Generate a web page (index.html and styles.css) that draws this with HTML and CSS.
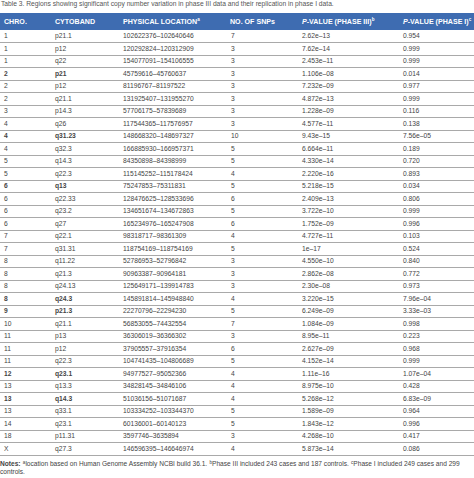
FILE: index.html
```html
<!DOCTYPE html>
<html>
<head>
<meta charset="utf-8">
<link rel="stylesheet" href="styles.css">
</head>
<body>
<div class="page">
  <p class="caption">Table 3. Regions showing significant copy number variation in phase III data and their replication in phase I data.</p>
  <table class="data">
    <colgroup>
      <col class="c1"><col class="c2"><col class="c3"><col class="c4"><col class="c5"><col class="c6">
    </colgroup>
    <thead>
      <tr>
        <th>CHRO.</th>
        <th>CYTOBAND</th>
        <th>PHYSICAL LOCATION<sup>a</sup></th>
        <th>NO. OF SNPs</th>
        <th><i>P</i>-VALUE (PHASE III)<sup>b</sup></th>
        <th><i>P</i>-VALUE (PHASE I)<sup>c</sup></th>
      </tr>
    </thead>
    <tbody>
      <tr><td>1</td><td>p21.1</td><td>102622376–102640646</td><td>7</td><td>2.62e–13</td><td>0.954</td></tr>
      <tr><td>1</td><td>p12</td><td>120292824–120312909</td><td>3</td><td>7.62e–14</td><td>0.999</td></tr>
      <tr><td>1</td><td>q22</td><td>154077091–154106555</td><td>3</td><td>2.453e–11</td><td>0.999</td></tr>
      <tr class="hl"><td>2</td><td>p21</td><td>45759616–45760637</td><td>3</td><td>1.106e–08</td><td>0.014</td></tr>
      <tr><td>2</td><td>p12</td><td>81196767–81197522</td><td>3</td><td>7.232e–09</td><td>0.977</td></tr>
      <tr><td>2</td><td>q21.1</td><td>131925407–131955270</td><td>3</td><td>4.872e–13</td><td>0.999</td></tr>
      <tr><td>3</td><td>p14.3</td><td>57706175–57839689</td><td>3</td><td>1.228e–09</td><td>0.116</td></tr>
      <tr><td>4</td><td>q26</td><td>117544365–117576957</td><td>3</td><td>4.577e–11</td><td>0.138</td></tr>
      <tr class="hl"><td>4</td><td>q31.23</td><td>148668320–148697327</td><td>10</td><td>9.43e–15</td><td>7.56e–05</td></tr>
      <tr><td>4</td><td>q32.3</td><td>166885930–166957371</td><td>5</td><td>6.664e–11</td><td>0.189</td></tr>
      <tr><td>5</td><td>q14.3</td><td>84350898–84398999</td><td>5</td><td>4.330e–14</td><td>0.720</td></tr>
      <tr><td>5</td><td>q22.3</td><td>115145252–115178424</td><td>4</td><td>2.220e–16</td><td>0.893</td></tr>
      <tr class="hl"><td>6</td><td>q13</td><td>75247853–75311831</td><td>5</td><td>5.218e–15</td><td>0.034</td></tr>
      <tr><td>6</td><td>q22.33</td><td>128476625–128533696</td><td>6</td><td>2.409e–13</td><td>0.806</td></tr>
      <tr><td>6</td><td>q23.2</td><td>134651674–134672863</td><td>5</td><td>3.722e–10</td><td>0.999</td></tr>
      <tr><td>6</td><td>q27</td><td>165234976–165247908</td><td>6</td><td>1.752e–09</td><td>0.996</td></tr>
      <tr><td>7</td><td>q22.1</td><td>98318717–98361309</td><td>4</td><td>4.727e–11</td><td>0.103</td></tr>
      <tr><td>7</td><td>q31.31</td><td>118754169–118754169</td><td>5</td><td>1e–17</td><td>0.524</td></tr>
      <tr><td>8</td><td>q11.22</td><td>52786953–52796842</td><td>3</td><td>4.550e–10</td><td>0.840</td></tr>
      <tr><td>8</td><td>q21.3</td><td>90963387–90964181</td><td>3</td><td>2.862e–08</td><td>0.772</td></tr>
      <tr><td>8</td><td>q24.13</td><td>125649171–139914783</td><td>3</td><td>2.30e–08</td><td>0.973</td></tr>
      <tr class="hl"><td>8</td><td>q24.3</td><td>145891814–145948840</td><td>4</td><td>3.220e–15</td><td>7.96e–04</td></tr>
      <tr class="hl"><td>9</td><td>p21.3</td><td>22270796–22294230</td><td>5</td><td>6.249e–09</td><td>3.33e–03</td></tr>
      <tr><td>10</td><td>q21.1</td><td>56853055–74432554</td><td>7</td><td>1.084e–09</td><td>0.998</td></tr>
      <tr><td>11</td><td>p13</td><td>36306019–36366302</td><td>3</td><td>8.95e–11</td><td>0.223</td></tr>
      <tr><td>11</td><td>p12</td><td>37905557–37916354</td><td>6</td><td>2.627e–09</td><td>0.968</td></tr>
      <tr><td>11</td><td>q22.3</td><td>104741435–104806689</td><td>5</td><td>4.152e–14</td><td>0.999</td></tr>
      <tr class="hl"><td>12</td><td>q23.1</td><td>94977527–95052366</td><td>4</td><td>1.11e–16</td><td>1.07e–04</td></tr>
      <tr><td>13</td><td>q13.3</td><td>34828145–34846106</td><td>4</td><td>8.975e–10</td><td>0.428</td></tr>
      <tr class="hl"><td>13</td><td>q14.3</td><td>51036156–51071687</td><td>4</td><td>5.268e–12</td><td>6.83e–09</td></tr>
      <tr><td>13</td><td>q33.1</td><td>103334252–103344370</td><td>5</td><td>1.589e–09</td><td>0.964</td></tr>
      <tr><td>14</td><td>q23.1</td><td>60136001–60140123</td><td>5</td><td>1.843e–12</td><td>0.996</td></tr>
      <tr><td>18</td><td>p11.31</td><td>3597746–3635894</td><td>3</td><td>4.268e–10</td><td>0.417</td></tr>
      <tr><td>X</td><td>q27.3</td><td>146596395–146646974</td><td>4</td><td>5.873e–14</td><td>0.086</td></tr>
    </tbody>
  </table>
  <p class="notes"><b>Notes:</b> <sup>a</sup>location based on Human Genome Assembly NCBI build 36.1. <sup>b</sup>Phase III included 243 cases and 187 controls. <sup>c</sup>Phase I included 249 cases and 299 controls.</p>
</div>
</body>
</html>
```

FILE: styles.css
```css
html, body {
  margin: 0;
  padding: 0;
  background: #ffffff;
}

body {
  font-family: "Liberation Sans", Arial, sans-serif;
  color: #444444;
  width: 474px;
  height: 478px;
  overflow: hidden;
}

.page {
  display: flex;
  flex-direction: column;
}

.caption {
  margin: 0 0 0 1px;
  font-size: 6.7px;
  line-height: 8px;
  height: 13px;
  color: #555;
  white-space: nowrap;
}

.data {
  width: 474px;
  border-collapse: collapse;
  table-layout: fixed;
  font-size: 6.7px;
}

.c1 { width: 55px; }
.c2 { width: 68px; }
.c3 { width: 107px; }
.c4 { width: 72px; }
.c5 { width: 101px; }
.c6 { width: 71px; }

.data th {
  background: #3e6cb1;
  color: #ffffff;
  font-weight: bold;
  font-size: 7.1px;
  text-align: left;
  height: 17px;
  padding: 0 0 0 4px;
  white-space: nowrap;
}

.data th:not(:first-child),
.data td:not(:first-child) {
  padding-left: 0;
}

.data sup {
  font-size: 4.5px;
  vertical-align: 3px;
  line-height: 0;
}

.data tbody tr {
  height: 12.5px;
}

.data td {
  padding: 0 0 0 4px;
  border-bottom: 1px solid #a9a9a9;
  white-space: nowrap;
  line-height: 10px;
}

.data td:nth-child(4) {
  padding-left: 1px;
}

.data tr.hl td:nth-child(1),
.data tr.hl td:nth-child(2) {
  font-weight: bold;
}

.notes {
  margin: 4px 0 0 0;
  font-size: 6.6px;
  line-height: 8.5px;
  color: #444;
  padding-right: 14px;
}

.notes sup {
  font-size: 4.5px;
  vertical-align: 2px;
  line-height: 4px;
  margin-left: 0.5px;
}
```
